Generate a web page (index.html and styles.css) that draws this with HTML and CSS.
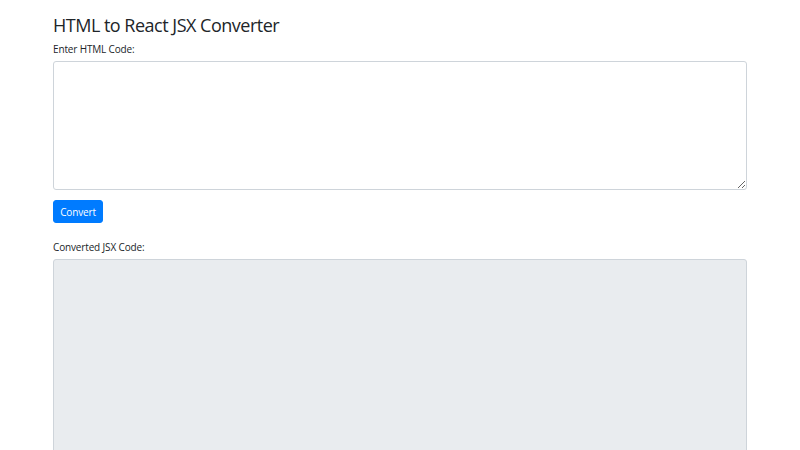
FILE: index.html
```html
<!DOCTYPE html>
<html>
<head>
<meta charset="utf-8">
<link rel="stylesheet" href="styles.css">
</head>
<body>
<div class="container">
  <h1 class="title">HTML to React JSX Converter</h1>
  <label class="label" for="html">Enter HTML Code:</label>
  <textarea id="html" class="input"></textarea>
  <button class="btn">Convert</button>
  <label class="label label-out" for="jsx">Converted JSX Code:</label>
  <textarea id="jsx" class="output" readonly></textarea>
</div>
</body>
</html>
```

FILE: styles.css
```css
html, body {
  margin: 0;
  padding: 0;
  background: #fff;
  overflow: hidden;
}
body {
  font-family: "Open Sans", "Noto Sans", sans-serif;
  color: #212529;
}
.container {
  width: 694px;
  height: 450px;
  margin: 0 auto;
  display: flex;
  flex-direction: column;
  align-items: flex-start;
}
.title {
  font-weight: 400;
  font-size: 18px;
  letter-spacing: -0.5px;
  line-height: 24px;
  margin: 13px 0 5px;
}
.label {
  font-size: 10px;
  letter-spacing: -0.15px;
  line-height: 14px;
  margin-bottom: 5px;
}
.input, .output {
  box-sizing: border-box;
  width: 694px;
  border: 1px solid #ced4da;
  border-radius: 3px;
  padding: 5px 9px;
  font-family: inherit;
  font-size: 11px;
  margin: 0;
  display: block;
  flex-shrink: 0;
}
.input {
  height: 129px;
  background: #fff;
}
.output {
  height: 220px;
  background: #e9ecef;
  resize: none;
}
.btn {
  margin-top: 10px;
  background: #007bff;
  color: #fff;
  border: 1px solid #007bff;
  border-radius: 3px;
  font-family: inherit;
  font-size: 10px;
  letter-spacing: -0.15px;
  height: 23px;
  width: 50px;
  padding: 0;
  flex-shrink: 0;
}
.label-out {
  margin-top: 17px;
}
```
